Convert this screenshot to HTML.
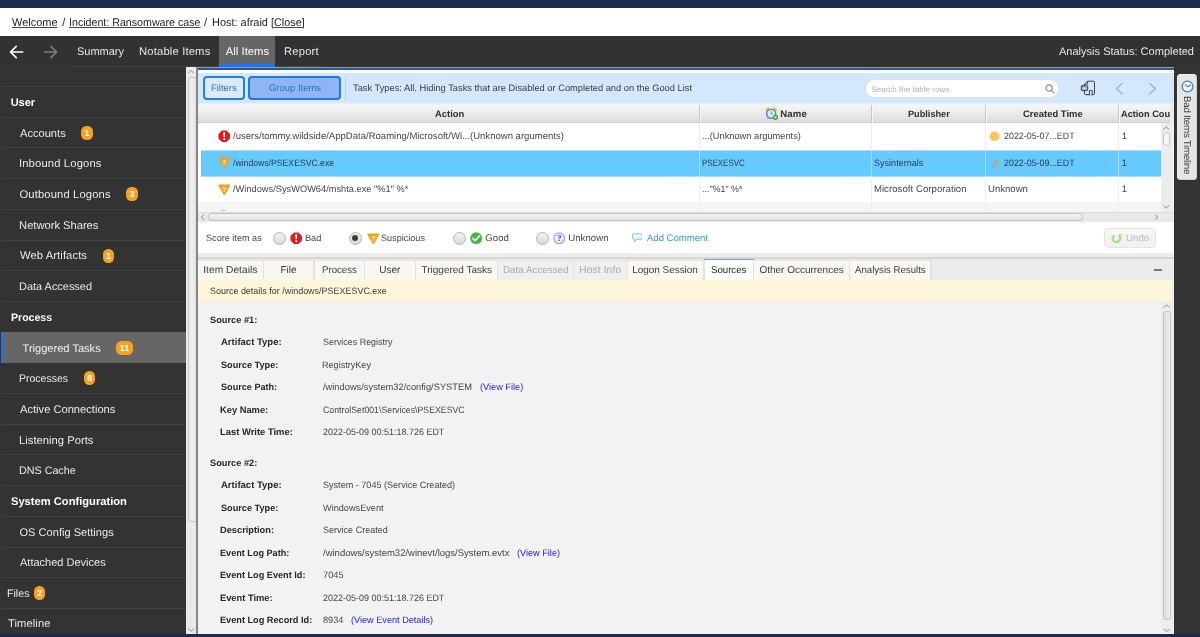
<!DOCTYPE html>
<html lang="en">
<head>
<meta charset="utf-8">
<title>Cyber Triage - Host: afraid</title>
<style>
html,body{margin:0;padding:0;}
body{width:1200px;height:637px;overflow:hidden;background:#333;font-family:"Liberation Sans",sans-serif;}
#root{position:relative;width:1200px;height:637px;overflow:hidden;background:#333;}
#root div,#root svg{position:absolute;box-sizing:border-box;}
#root .tl{left:0;top:0;width:1200px;height:637px;will-change:transform;pointer-events:none;}
.t u{text-decoration-thickness:1px;text-underline-offset:1px;text-decoration-color:#4a4a4a;}
.t{position:absolute;display:block;text-rendering:geometricPrecision;transform-origin:0 50%;height:16px;line-height:16px;white-space:nowrap;font-family:"Liberation Sans",sans-serif;}
.bdg{background:#f7a11d;border-radius:5.2px;color:#fff;font-weight:bold;font-size:9px;line-height:14px;text-align:center;font-family:"Liberation Sans",sans-serif;}
.tab{background:#faf7f4;border-top:1px solid #e3e3e3;}
.tab.dis{background:#efefef;}
.tab.act{background:#fff;border-top:1.6px solid #7a9bd0;}
.radio{border-radius:50%;border:1px solid #b4b4b4;background:linear-gradient(#f2f2f2,#dadada);}
.radio.on:after{content:"";position:absolute;left:2.4px;top:2.4px;width:6.2px;height:6.2px;border-radius:50%;background:#3c3c3c;}
</style>
</head>
<body>
<div id="root">

<header id="titlebar">
<div style="left:0.00px;top:0.00px;width:1200.00px;height:8.00px;background:#1b2a4e;"></div>
<div style="left:0.00px;top:8.00px;width:1200.00px;height:28.00px;background:#fff;"></div>
<div style="left:0.00px;top:36.00px;width:1200.00px;height:31.00px;background:#323232;"></div>
<div class="tl">
<span class="t" id="t0" style="left:12.45px;top:15.02px;font-size:11.13px;color:#222;transform:scaleX(0.9862);"><u>Welcome</u></span>
<span class="t" id="t1" style="left:62.30px;top:15.02px;font-size:11.30px;color:#222;">/</span>
<span class="t" id="t2" style="left:69.02px;top:15.02px;font-size:11.13px;color:#222;transform:scaleX(0.9576);"><u>Incident: Ransomware case</u></span>
<span class="t" id="t3" style="left:204.00px;top:15.02px;font-size:11.30px;color:#222;">/</span>
<span class="t" id="t4" style="left:211.80px;top:15.02px;font-size:11.13px;color:#222;transform:scaleX(0.9826);">Host: afraid</span>
<span class="t" id="t5" style="left:271.03px;top:15.02px;font-size:11.13px;color:#222;transform:scaleX(0.9746);"><u>[Close]</u></span>
</div>
</header>
<nav id="topnav">
<div style="left:70.00px;top:66.20px;width:253.00px;height:0.80px;background:#414141;"></div>
<div style="left:218.50px;top:36.00px;width:56.50px;height:31.00px;background:#666;"></div>
<div style="left:218.50px;top:64.30px;width:56.50px;height:2.70px;background:#1a73ff;"></div>
<svg style="left:8px;top:44px" width="52" height="16" viewBox="8 44 52 16" fill="none" stroke-width="1.7" stroke-linecap="round" stroke-linejoin="round"><path d="M22.6 52H10.6M16.2 46.3L10.6 52l5.6 5.7" stroke="#fff"/><path d="M44.6 52h12M51 46.3l5.6 5.7-5.6 5.7" stroke="#7d7d7d"/></svg>
<div class="tl">
<span class="t" id="t6" style="left:77.00px;top:44.01px;font-size:10.99px;color:#e6e6e6;letter-spacing:0.003px;">Summary</span>
<span class="t" id="t7" style="left:139.08px;top:44.01px;font-size:11.22px;color:#e6e6e6;letter-spacing:0.162px;">Notable Items</span>
<span class="t" id="t8" style="left:225.78px;top:44.01px;font-size:11.22px;color:#fff;letter-spacing:0.035px;">All Items</span>
<span class="t" id="t9" style="left:284.08px;top:44.01px;font-size:11.22px;color:#e6e6e6;letter-spacing:0.169px;">Report</span>
<span class="t" id="t10" style="left:1058.98px;top:44.01px;font-size:11.04px;color:#e6e6e6;letter-spacing:0.005px;">Analysis Status: Completed</span>
</div>
</nav>
<aside id="sidebar">
<div style="left:0.00px;top:67.00px;width:186.30px;height:566.50px;background:#333;"></div>
<div style="left:1.00px;top:85.80px;width:185.00px;height:1.00px;background:#41403b;"></div>
<div style="left:1.00px;top:116.50px;width:185.00px;height:1.00px;background:#41403b;"></div>
<div style="left:1.00px;top:147.30px;width:185.00px;height:1.00px;background:#41403b;"></div>
<div style="left:1.00px;top:178.10px;width:185.00px;height:1.00px;background:#41403b;"></div>
<div style="left:1.00px;top:208.80px;width:185.00px;height:1.00px;background:#41403b;"></div>
<div style="left:1.00px;top:239.50px;width:185.00px;height:1.00px;background:#41403b;"></div>
<div style="left:1.00px;top:270.20px;width:185.00px;height:1.00px;background:#41403b;"></div>
<div style="left:1.00px;top:300.90px;width:185.00px;height:1.00px;background:#41403b;"></div>
<div style="left:1.00px;top:392.90px;width:185.00px;height:1.00px;background:#41403b;"></div>
<div style="left:1.00px;top:423.60px;width:185.00px;height:1.00px;background:#41403b;"></div>
<div style="left:1.00px;top:454.30px;width:185.00px;height:1.00px;background:#41403b;"></div>
<div style="left:1.00px;top:485.10px;width:185.00px;height:1.00px;background:#41403b;"></div>
<div style="left:1.00px;top:515.80px;width:185.00px;height:1.00px;background:#41403b;"></div>
<div style="left:1.00px;top:546.50px;width:185.00px;height:1.00px;background:#41403b;"></div>
<div style="left:1.00px;top:577.20px;width:185.00px;height:1.00px;background:#41403b;"></div>
<div style="left:1.00px;top:607.90px;width:185.00px;height:1.00px;background:#41403b;"></div>
<div style="left:1.00px;top:332.20px;width:185.30px;height:30.60px;background:#666;"></div>
<div style="left:1.00px;top:332.20px;width:2.20px;height:30.60px;background:#1f6fff;"></div>
<div class="bdg" style="left:81.30px;top:125.80px;width:11.50px;height:14.00px;">1</div>
<div class="bdg" style="left:126.20px;top:187.10px;width:11.80px;height:14.00px;">3</div>
<div class="bdg" style="left:102.70px;top:248.50px;width:11.50px;height:14.00px;">1</div>
<div class="bdg" style="left:116.20px;top:340.80px;width:16.60px;height:14.00px;">11</div>
<div class="bdg" style="left:84.20px;top:371.40px;width:11.30px;height:14.00px;">8</div>
<div class="bdg" style="left:34.20px;top:585.90px;width:11.00px;height:14.00px;">2</div>
<div style="left:186.30px;top:67.00px;width:9.90px;height:566.50px;background:#e9e9e9;"></div>
<div style="left:188.00px;top:77.00px;width:8.40px;height:444.70px;background:linear-gradient(90deg,#e6e6e6,#f0f0f0 40%,#e2e2e2);border:1px solid #cbcbcb;border-right:none;border-radius:3.5px 0 0 3.5px;"></div>
<svg style="left:186.3px;top:67px" width="10" height="567" viewBox="0 0 10 567" fill="none" stroke="#8a8a8a" stroke-width="1"><path d="M2.2 6.2L5 3.4l2.8 2.8"/><path d="M2.2 561.5L5 564.3l2.8-2.8"/></svg>
<div style="left:196.20px;top:67.00px;width:1.60px;height:566.50px;background:#858585;"></div>
<div class="tl">
<span class="t" id="t11" style="left:10.64px;top:95.01px;font-size:11.03px;color:#fff;letter-spacing:0.007px;font-weight:bold;">User</span>
<span class="t" id="t12" style="left:19.98px;top:126.00px;font-size:11.12px;color:#e9e9e9;letter-spacing:0.003px;">Accounts</span>
<span class="t" id="t13" style="left:18.96px;top:156.01px;font-size:11.22px;color:#e9e9e9;letter-spacing:0.154px;">Inbound Logons</span>
<span class="t" id="t14" style="left:19.47px;top:187.00px;font-size:11.22px;color:#e9e9e9;letter-spacing:0.136px;">Outbound Logons</span>
<span class="t" id="t15" style="left:19.09px;top:218.00px;font-size:11.15px;color:#e9e9e9;letter-spacing:0.004px;">Network Shares</span>
<span class="t" id="t16" style="left:19.95px;top:248.02px;font-size:11.22px;color:#e9e9e9;letter-spacing:0.097px;">Web Artifacts</span>
<span class="t" id="t17" style="left:19.10px;top:279.01px;font-size:10.93px;color:#e9e9e9;letter-spacing:0.003px;">Data Accessed</span>
<span class="t" id="t18" style="left:10.59px;top:310.00px;font-size:10.83px;color:#fff;transform:scaleX(0.9738);font-weight:bold;">Process</span>
<span class="t" id="t19" style="left:22.55px;top:341.01px;font-size:11.07px;color:#f2f2f2;letter-spacing:0.004px;">Triggered Tasks</span>
<span class="t" id="t20" style="left:19.14px;top:371.01px;font-size:10.83px;color:#e9e9e9;transform:scaleX(0.9699);">Processes</span>
<span class="t" id="t21" style="left:19.98px;top:402.01px;font-size:11.15px;color:#e9e9e9;letter-spacing:0.003px;">Active Connections</span>
<span class="t" id="t22" style="left:19.08px;top:433.01px;font-size:11.22px;color:#e9e9e9;letter-spacing:0.007px;">Listening Ports</span>
<span class="t" id="t23" style="left:19.12px;top:463.01px;font-size:10.83px;color:#e9e9e9;transform:scaleX(0.9910);">DNS Cache</span>
<span class="t" id="t24" style="left:10.98px;top:494.01px;font-size:11.16px;color:#fff;font-weight:bold;">System Configuration</span>
<span class="t" id="t25" style="left:19.48px;top:525.01px;font-size:11.08px;color:#e9e9e9;">OS Config Settings</span>
<span class="t" id="t26" style="left:19.98px;top:555.00px;font-size:11.01px;color:#e9e9e9;letter-spacing:0.007px;">Attached Devices</span>
<span class="t" id="t27" style="left:7.43px;top:586.00px;font-size:10.83px;color:#e9e9e9;transform:scaleX(0.9817);">Files</span>
<span class="t" id="t28" style="left:8.05px;top:616.01px;font-size:11.22px;color:#e9e9e9;letter-spacing:0.058px;">Timeline</span>
</div>
</aside>
<main id="main-panel">
<div style="left:197.80px;top:67.00px;width:975.90px;height:566.50px;background:#f2f2f2;"></div>
<div style="left:197.80px;top:67.00px;width:975.90px;height:1.00px;background:#9a9a9a;"></div>
<div style="left:197.80px;top:67.70px;width:975.90px;height:2.30px;background:#2b579a;"></div>
<div style="left:197.80px;top:70.00px;width:975.90px;height:2.60px;background:#fff;"></div>
<div style="left:197.80px;top:72.60px;width:975.90px;height:30.80px;background:#d3e8fd;"></div>
<div style="left:197.80px;top:103.40px;width:975.90px;height:1.10px;background:#e4f0fb;"></div>
<section id="toolbar">
<div style="left:203.30px;top:76.20px;width:41.50px;height:23.60px;background:#d9eafc;border:2px solid #2480d6;border-radius:4px;"></div>
<div style="left:248.00px;top:76.20px;width:93.20px;height:23.60px;background:#8fb5f6;border:2px solid #2478d8;border-radius:4px;"></div>
<div style="left:345.00px;top:77.00px;width:1.00px;height:22.50px;background:#c3cfdc;"></div>
<div style="left:864.80px;top:79.30px;width:194.60px;height:18.50px;background:#fff;border:1px solid #dcdfe4;border-radius:9.25px;"></div>
<svg style="left:1044px;top:83px" width="12" height="12" viewBox="0 0 12 12" fill="none" stroke="#8a8a8a" stroke-width="1.2" stroke-linecap="round"><circle cx="5" cy="5" r="3.1"/><path d="M7.4 7.4l2.7 2.7"/></svg>
<svg style="left:1080px;top:80px" width="17" height="17" viewBox="0 0 17 17" fill="none" stroke="#36404e" stroke-width="1" stroke-linejoin="round" stroke-linecap="round"><path d="M4.400 5.600V4.300L7.500 1.200H13a1.500 1.500 0 0 1 1.500 1.500v10.500a1.500 1.500 0 0 1-1.500 1.500H5.900a1.500 1.500 0 0 1-1.500-1.500v-2.400"/><path d="M4.700 4.400h2.800V1.600" stroke-width=".8"/><rect x="1.300" y="5.800" width="6.400" height="4.800" rx=".8" fill="#a9b3bf"/><path d="M3.200 8.200h2.600" stroke="#eef2f6" stroke-width=".9"/><path d="M9.400 14.700v-4.100h2.800v4.100" fill="#e6eef7"/></svg>
<svg style="left:1114px;top:82px" width="46" height="14" viewBox="0 0 46 14" fill="none" stroke="#97a1ad" stroke-width="1.100" stroke-linecap="round" stroke-linejoin="round"><path d="M8.200 1.300L2.400 6.600l5.800 5.300"/><path d="M35.600 1.300l5.800 5.300-5.800 5.300"/></svg>
<div class="tl">
<span class="t" id="t29" style="left:210.93px;top:80.02px;font-size:9.43px;color:#2a78d2;transform:scaleX(0.9983);">Filters</span>
<span class="t" id="t30" style="left:268.72px;top:81.01px;font-size:9.50px;color:#2a70cc;transform:scaleX(0.9969);">Group Items</span>
<span class="t" id="t31" style="left:352.79px;top:80.01px;font-size:9.32px;color:#3a3a3a;transform:scaleX(0.9977);">Task Types: All. Hiding Tasks that are Disabled or Completed and on the Good List</span>
<span class="t" id="t32" style="left:871.33px;top:82.01px;font-size:8.06px;color:#b0b0b0;letter-spacing:0.005px;">Search the table rows</span>
</div>
</section>
<section id="items-table">
<div style="left:198.30px;top:104.50px;width:971.90px;height:18.30px;background:linear-gradient(#f6f6f6,#ececec 45%,#dcdcdc);border-bottom:1px solid #cfcfcf;"></div>
<div style="left:1170.20px;top:104.50px;width:3.50px;height:18.30px;background:#ececec;"></div>
<div style="left:698.70px;top:105.00px;width:1.20px;height:17.50px;background:#c6c6c6;"></div>
<div style="left:699.90px;top:105.00px;width:0.90px;height:17.50px;background:#f7f7f7;"></div>
<div style="left:870.80px;top:105.00px;width:1.20px;height:17.50px;background:#c6c6c6;"></div>
<div style="left:872.00px;top:105.00px;width:0.90px;height:17.50px;background:#f7f7f7;"></div>
<div style="left:984.80px;top:105.00px;width:1.20px;height:17.50px;background:#c6c6c6;"></div>
<div style="left:986.00px;top:105.00px;width:0.90px;height:17.50px;background:#f7f7f7;"></div>
<div style="left:1118.10px;top:105.00px;width:1.20px;height:17.50px;background:#c6c6c6;"></div>
<div style="left:1119.30px;top:105.00px;width:0.90px;height:17.50px;background:#f7f7f7;"></div>
<div style="left:198.30px;top:122.80px;width:963.00px;height:79.20px;background:#fff;"></div>
<div style="left:198.30px;top:202.00px;width:963.00px;height:9.60px;background:#f5f5f5;"></div>
<div style="left:200.60px;top:149.60px;width:960.70px;height:27.20px;background:#66caff;border-top:1.7px solid #abdefc;border-bottom:1.3px solid #abdefc;"></div>
<div style="left:698.80px;top:125.00px;width:1.00px;height:86.60px;background:#ededed;"></div>
<div style="left:698.80px;top:151.00px;width:1.20px;height:24.60px;background:#a6dcfb;"></div>
<div style="left:870.90px;top:125.00px;width:1.00px;height:86.60px;background:#ededed;"></div>
<div style="left:870.90px;top:151.00px;width:1.20px;height:24.60px;background:#a6dcfb;"></div>
<div style="left:984.90px;top:125.00px;width:1.00px;height:86.60px;background:#ededed;"></div>
<div style="left:984.90px;top:151.00px;width:1.20px;height:24.60px;background:#a6dcfb;"></div>
<div style="left:1118.20px;top:125.00px;width:1.00px;height:86.60px;background:#ededed;"></div>
<div style="left:1118.20px;top:151.00px;width:1.20px;height:24.60px;background:#a6dcfb;"></div>
<div style="left:221.00px;top:210.40px;width:5.00px;height:1.00px;background:#a4e08c;border-radius:2px 2px 0 0;"></div>
<svg style="left:217.70px;top:130.00px" width="12.4" height="12.4" viewBox="0 0 24 24"><path d="M7.6 .8h8.8l6.8 6.8v8.8l-6.8 6.8H7.6L.8 16.4V7.6z" fill="#e01b24"/><path d="M10.2 4.2h3.6l-.6 10h-2.4z" fill="#fff"/><circle cx="12" cy="18" r="2" fill="#fff"/></svg>
<svg style="left:217.60px;top:157.40px" width="12.6" height="11.6" viewBox="0 0 25 23"><path d="M2.2 1h20.6c1.3 0 1.9 1.2 1.3 2.3L14 21.4c-.7 1.2-2.3 1.2-3 0L.9 3.3C.3 2.200 .9 1 2.200 1z" fill="#f7a11a"/><text x="12.5" y="15.6" font-family="Liberation Sans, sans-serif" font-weight="bold" font-size="15.5" fill="#fffaf0" text-anchor="middle">?</text></svg>
<svg style="left:217.60px;top:183.90px" width="12.6" height="11.6" viewBox="0 0 25 23"><path d="M2.2 1h20.6c1.3 0 1.9 1.2 1.3 2.3L14 21.4c-.7 1.2-2.3 1.2-3 0L.9 3.3C.3 2.200 .9 1 2.200 1z" fill="#f7a11a"/><text x="12.5" y="15.6" font-family="Liberation Sans, sans-serif" font-weight="bold" font-size="15.5" fill="#fffaf0" text-anchor="middle">?</text></svg>
<svg style="left:989.400px;top:130.500px" width="10.8" height="10.8" viewBox="0 0 20 20"><circle cx="10" cy="10" r="8.200" fill="#f8c54f"/><circle cx="10" cy="10" r="9.300" fill="none" stroke="#f8c54f" stroke-width="1.800" stroke-dasharray="2.200 1.700"/></svg>
<svg style="left:991.200px;top:158.800px" width="9" height="9" viewBox="0 0 18 18"><path d="M7.600 1.200c4.800.8 7.600 4.800 6.600 9.200-.8 3.600-4.400 6-8.600 5.400-1.400-.2-2.600-.8-3.400-1.600 3.200-.2 5.800-2.400 6.400-5.600.4-2.800-.4-5.400-1-7.400z" fill="#c9b48c" stroke="#8f8466" stroke-width="1"/></svg>
<svg style="left:764.8px;top:107px" width="13.2" height="13.2" viewBox="0 0 26 26"><ellipse cx="4.800" cy="4.400" rx="4.600" ry="3" transform="rotate(-40 4.800 4.400)" fill="#f5c04a"/><ellipse cx="19.600" cy="4.400" rx="4.600" ry="3" transform="rotate(40 19.600 4.400)" fill="#f5c04a"/><path d="M4.500 24.500l2.500-3M19.900 24.500l-2.500-3" stroke="#8a97ad" stroke-width="1.600"/><circle cx="12.200" cy="13.300" r="10.400" fill="#4a8ede"/><circle cx="12.200" cy="13.300" r="7.300" fill="#e1edfc"/><path d="M12.200 8.600v5h3.400" fill="none" stroke="#6b7c99" stroke-width="1.700"/><circle cx="20.600" cy="20.300" r="5.300" fill="#3fae3a"/><path d="M18.700 17.300l5.200 3-5.200 3z" fill="#c6efb4"/></svg>
<div style="left:1161.30px;top:122.80px;width:10.30px;height:88.80px;background:#ececec;"></div>
<div style="left:1163.00px;top:132.00px;width:7.20px;height:13.60px;background:#f6f6f6;border:1px solid #c6c6c6;border-radius:3.5px;"></div>
<svg style="left:1161.3px;top:122.8px" width="10.3" height="89" viewBox="0 0 10.3 89" fill="none" stroke="#8a8a8a" stroke-width="1"><path d="M2.3 6.6l2.9-2.8 2.9 2.8"/><path d="M2.3 82.4l2.9 2.8 2.9-2.8"/></svg>
<div style="left:198.30px;top:211.60px;width:975.40px;height:10.20px;background:#e9e9e9;border-top:1px solid #dcdcdc;"></div>
<div style="left:208.40px;top:212.80px;width:874.60px;height:8.00px;background:linear-gradient(#f4f4f4,#e2e2e2);border:1px solid #c2c2c2;border-radius:3.5px;"></div>
<svg style="left:198.3px;top:211.6px" width="975" height="10.2" viewBox="0 0 975 10.2" fill="none" stroke="#8a8a8a" stroke-width="1"><path d="M5.6 2.4L2.8 5.2l2.8 2.8"/><path d="M957.4 2.4l2.8 2.8-2.8 2.8"/></svg>
<div class="tl">
<span class="t" id="t33" style="left:435.07px;top:106.01px;font-size:9.41px;color:#2e2e2e;transform:scaleX(0.9983);font-weight:bold;">Action</span>
<span class="t" id="t34" style="left:780.16px;top:107.01px;font-size:9.59px;color:#2e2e2e;letter-spacing:0.194px;font-weight:bold;">Name</span>
<span class="t" id="t35" style="left:908.09px;top:106.01px;font-size:9.26px;color:#2e2e2e;transform:scaleX(0.9904);font-weight:bold;">Publisher</span>
<span class="t" id="t36" style="left:1022.61px;top:107.00px;font-size:9.48px;color:#2e2e2e;transform:scaleX(0.9981);font-weight:bold;">Created Time</span>
<span class="t" id="t37" style="left:1121.27px;top:106.01px;font-size:9.26px;color:#2e2e2e;transform:scaleX(0.9941);font-weight:bold;">Action Cou</span>
<span class="t" id="t38" style="left:233.00px;top:129.01px;font-size:9.57px;color:#454545;transform:scaleX(0.9984);">/users/tommy.wildside/AppData/Roaming/Microsoft/Wi...(Unknown arguments)</span>
<span class="t" id="t39" style="left:701.65px;top:128.01px;font-size:9.29px;color:#454545;transform:scaleX(0.9987);">...(Unknown arguments)</span>
<span class="t" id="t40" style="left:1003.75px;top:128.01px;font-size:9.26px;color:#454545;transform:scaleX(0.9608);">2022-05-07...EDT</span>
<span class="t" id="t41" style="left:1121.78px;top:128.00px;font-size:9.40px;color:#454545;">1</span>
<span class="t" id="t42" style="left:233.00px;top:155.01px;font-size:9.26px;color:#2b3d4a;transform:scaleX(0.9362);">/windows/PSEXESVC.exe</span>
<span class="t" id="t43" style="left:701.85px;top:155.01px;font-size:9.26px;color:#2b3d4a;transform:scaleX(0.8552);">PSEXESVC</span>
<span class="t" id="t44" style="left:874.29px;top:155.01px;font-size:9.26px;color:#2b3d4a;transform:scaleX(0.9791);">Sysinternals</span>
<span class="t" id="t45" style="left:1003.75px;top:155.01px;font-size:9.26px;color:#2b3d4a;transform:scaleX(0.9608);">2022-05-09...EDT</span>
<span class="t" id="t46" style="left:1121.78px;top:155.01px;font-size:9.40px;color:#2b3d4a;">1</span>
<span class="t" id="t47" style="left:233.00px;top:181.00px;font-size:9.29px;color:#454545;transform:scaleX(0.9982);">/Windows/SysWOW64/mshta.exe &quot;%1&quot; %*</span>
<span class="t" id="t48" style="left:701.69px;top:181.01px;font-size:9.26px;color:#454545;transform:scaleX(0.9621);">...&quot;%1&quot; %*</span>
<span class="t" id="t49" style="left:873.91px;top:182.01px;font-size:9.59px;color:#454545;letter-spacing:0.055px;">Microsoft Corporation</span>
<span class="t" id="t50" style="left:987.96px;top:182.01px;font-size:9.58px;color:#454545;transform:scaleX(0.9980);">Unknown</span>
<span class="t" id="t51" style="left:1121.78px;top:181.01px;font-size:9.40px;color:#454545;">1</span>
</div>
</section>
<section id="scorebar">
<div style="left:197.80px;top:221.80px;width:975.90px;height:30.90px;background:#fff;"></div>
<div style="left:197.80px;top:252.70px;width:975.90px;height:3.90px;background:#ededed;"></div>
<div style="left:197.80px;top:256.70px;width:975.90px;height:2.00px;background:#d5d5d5;"></div>
<div class="radio" style="left:272.80px;top:231.70px;width:13.00px;height:13.00px;"></div>
<div class="radio on" style="left:348.90px;top:231.70px;width:13.00px;height:13.00px;"></div>
<div class="radio" style="left:453.10px;top:231.70px;width:13.00px;height:13.00px;"></div>
<div class="radio" style="left:536.00px;top:231.70px;width:13.00px;height:13.00px;"></div>
<svg style="left:290.00px;top:232.10px" width="12.4" height="12.4" viewBox="0 0 24 24"><path d="M7.6 .8h8.8l6.8 6.8v8.8l-6.8 6.8H7.6L.8 16.4V7.6z" fill="#e01b24"/><path d="M10.2 4.2h3.6l-.6 10h-2.4z" fill="#fff"/><circle cx="12" cy="18" r="2" fill="#fff"/></svg>
<svg style="left:366.50px;top:232.80px" width="12.6" height="11.6" viewBox="0 0 25 23"><path d="M2.2 1h20.6c1.3 0 1.9 1.2 1.3 2.3L14 21.4c-.7 1.2-2.3 1.2-3 0L.9 3.3C.3 2.200 .9 1 2.200 1z" fill="#f7a11a"/><text x="12.5" y="15.6" font-family="Liberation Sans, sans-serif" font-weight="bold" font-size="15.5" fill="#fffaf0" text-anchor="middle">?</text></svg>
<svg style="left:470.30px;top:232.00px" width="12.4" height="12.4" viewBox="0 0 24 24"><circle cx="12" cy="12" r="11.6" fill="#4cb648"/><path d="M5.600 12.400l4.400 4.600 8.600-9.600" fill="none" stroke="#fff" stroke-width="3.2" stroke-linecap="round" stroke-linejoin="round"/></svg>
<svg style="left:553.40px;top:232.00px" width="12.4" height="12.4" viewBox="0 0 24 24"><circle cx="12" cy="12" r="10.4" fill="#e9edff" stroke="#9aa6f4" stroke-width="2.4"/><text x="12" y="18" font-family="Liberation Serif, serif" font-weight="bold" font-size="17" fill="#2f49c8" text-anchor="middle">?</text></svg>
<svg style="left:631.6px;top:233px" width="10.8" height="9.9" viewBox="0 0 12 11" fill="#f2f8fd" stroke="#78b4de" stroke-width="1" stroke-linejoin="round"><path d="M1.6.9h8.600c.6 0 1 .4 1 1v4c0 .6-.4 1-1 1H5.400L3 9.400V6.900H1.600c-.6 0-1-.4-1-1v-4c0-.6.4-1 1-1z"/></svg>
<div style="left:1104.30px;top:228.00px;width:51.30px;height:19.80px;background:linear-gradient(#fbf7f5 0,#fbf7f5 27%,#f2f2f2 27%);border:1px solid #e4e4e4;border-radius:3.5px;"></div>
<svg style="left:1111.400px;top:232.600px" width="11" height="11" viewBox="0 0 11 11" fill="none"><path d="M2.600 3.200A3.600 3.600 0 1 0 8.300 3.100" stroke="#a6df8a" stroke-width="2.300" stroke-linecap="round"/><path d="M7.200 .4h3.400v3.200z" fill="#b4e59c"/></svg>
<div class="tl">
<span class="t" id="t52" style="left:206.29px;top:230.01px;font-size:9.26px;color:#444;transform:scaleX(0.9855);">Score item as</span>
<span class="t" id="t53" style="left:305.05px;top:230.01px;font-size:9.26px;color:#444;transform:scaleX(0.9926);">Bad</span>
<span class="t" id="t54" style="left:381.39px;top:230.01px;font-size:9.26px;color:#444;transform:scaleX(0.9823);">Suspicious</span>
<span class="t" id="t55" style="left:485.32px;top:231.01px;font-size:9.59px;color:#444;letter-spacing:0.041px;">Good</span>
<span class="t" id="t56" style="left:568.26px;top:231.01px;font-size:9.59px;color:#444;letter-spacing:0.061px;">Unknown</span>
<span class="t" id="t57" style="left:646.68px;top:231.01px;font-size:9.55px;color:#2a9fd8;transform:scaleX(0.9977);">Add Comment</span>
<span class="t" id="t58" style="left:1126.06px;top:231.01px;font-size:9.59px;color:#bcbcbc;letter-spacing:0.059px;">Undo</span>
</div>
</section>
<section id="detail-tabs">
<div style="left:197.80px;top:258.70px;width:975.90px;height:20.90px;background:#ebebeb;"></div>
<div class="tab" style="left:197.80px;top:259.60px;width:65.40px;height:20.00px;"></div>
<div class="tab" style="left:263.20px;top:259.60px;width:50.80px;height:20.00px;"></div>
<div class="tab" style="left:314.00px;top:259.60px;width:50.60px;height:20.00px;"></div>
<div class="tab" style="left:364.60px;top:259.60px;width:51.00px;height:20.00px;"></div>
<div class="tab" style="left:415.60px;top:259.60px;width:81.60px;height:20.00px;"></div>
<div class="tab dis" style="left:497.20px;top:259.60px;width:76.40px;height:20.00px;"></div>
<div class="tab dis" style="left:573.60px;top:259.60px;width:54.00px;height:20.00px;"></div>
<div class="tab" style="left:627.60px;top:259.60px;width:76.40px;height:20.00px;"></div>
<div class="tab act" style="left:704.00px;top:258.60px;width:49.80px;height:21.00px;"></div>
<div class="tab" style="left:753.80px;top:259.60px;width:95.60px;height:20.00px;"></div>
<div class="tab" style="left:849.40px;top:259.60px;width:81.60px;height:20.00px;"></div>
<div style="left:262.60px;top:259.60px;width:1.20px;height:20.00px;background:#e0e2e7;"></div>
<div style="left:313.40px;top:259.60px;width:1.20px;height:20.00px;background:#e0e2e7;"></div>
<div style="left:364.00px;top:259.60px;width:1.20px;height:20.00px;background:#e0e2e7;"></div>
<div style="left:415.00px;top:259.60px;width:1.20px;height:20.00px;background:#e0e2e7;"></div>
<div style="left:496.60px;top:259.60px;width:1.20px;height:20.00px;background:#e0e2e7;"></div>
<div style="left:573.00px;top:259.60px;width:1.20px;height:20.00px;background:#e0e2e7;"></div>
<div style="left:627.00px;top:259.60px;width:1.20px;height:20.00px;background:#e0e2e7;"></div>
<div style="left:703.40px;top:259.60px;width:1.20px;height:20.00px;background:#e0e2e7;"></div>
<div style="left:753.20px;top:259.60px;width:1.20px;height:20.00px;background:#e0e2e7;"></div>
<div style="left:848.80px;top:259.60px;width:1.20px;height:20.00px;background:#e0e2e7;"></div>
<div style="left:930.40px;top:259.60px;width:1.20px;height:20.00px;background:#e0e2e7;"></div>
<div style="left:1154.20px;top:269.20px;width:8.20px;height:2.00px;background:#777;"></div>
<div class="tl">
<span class="t" id="t59" style="left:203.26px;top:263.00px;font-size:10.20px;color:#3c3c3c;letter-spacing:0.026px;">Item Details</span>
<span class="t" id="t60" style="left:280.48px;top:263.01px;font-size:10.03px;color:#3c3c3c;letter-spacing:0.007px;">File</span>
<span class="t" id="t61" style="left:321.71px;top:263.01px;font-size:9.85px;color:#3c3c3c;transform:scaleX(0.9797);">Process</span>
<span class="t" id="t62" style="left:379.22px;top:263.01px;font-size:10.06px;color:#3c3c3c;letter-spacing:0.006px;">User</span>
<span class="t" id="t63" style="left:421.47px;top:263.00px;font-size:10.00px;color:#3c3c3c;">Triggered Tasks</span>
<span class="t" id="t64" style="left:502.89px;top:263.01px;font-size:9.85px;color:#a9a9a9;transform:scaleX(0.9980);">Data Accessed</span>
<span class="t" id="t65" style="left:579.16px;top:263.00px;font-size:10.20px;color:#a9a9a9;letter-spacing:0.143px;">Host Info</span>
<span class="t" id="t66" style="left:632.19px;top:263.02px;font-size:9.92px;color:#3c3c3c;letter-spacing:0.009px;">Logon Session</span>
<span class="t" id="t67" style="left:711.26px;top:263.01px;font-size:9.85px;color:#222;transform:scaleX(0.9796);">Sources</span>
<span class="t" id="t68" style="left:759.53px;top:263.00px;font-size:9.96px;color:#3c3c3c;letter-spacing:0.003px;">Other Occurrences</span>
<span class="t" id="t69" style="left:854.98px;top:263.01px;font-size:9.85px;color:#3c3c3c;transform:scaleX(0.9785);">Analysis Results</span>
</div>
</section>
<section id="source-details">
<div style="left:197.80px;top:279.60px;width:974.60px;height:21.60px;background:#fff5d8;"></div>
<div style="left:1172.40px;top:258.70px;width:1.30px;height:374.80px;background:#ededed;"></div>
<div style="left:197.80px;top:301.20px;width:975.90px;height:332.30px;background:#f2f2f2;"></div>
<div style="left:1161.40px;top:301.60px;width:12.30px;height:331.90px;background:#ececec;"></div>
<div style="left:1163.40px;top:311.20px;width:7.50px;height:309.20px;background:linear-gradient(90deg,#dedede,#ececec);border:1px solid #c2c5c9;border-radius:2.5px;"></div>
<svg style="left:1162.4px;top:301.6px" width="9.2" height="332" viewBox="0 0 9.2 332" fill="none" stroke="#8a8a8a" stroke-width="1"><path d="M1.800 5.400L4.600 2.600l2.800 2.800"/><path d="M1.800 327.100l2.800 2.800 2.800-2.800"/></svg>
<div class="tl">
<span class="t" id="t70" style="left:209.89px;top:283.02px;font-size:9.26px;color:#3a3a3a;transform:scaleX(0.9686);">Source details for /windows/PSEXESVC.exe</span>
<span class="t" id="t71" style="left:210.43px;top:312.00px;font-size:9.27px;color:#262626;transform:scaleX(0.9971);font-weight:bold;">Source #1:</span>
<span class="t" id="t72" style="left:220.76px;top:335.01px;font-size:9.55px;color:#262626;transform:scaleX(0.9971);font-weight:bold;">Artifact Type:</span>
<span class="t" id="t73" style="left:220.74px;top:357.02px;font-size:9.26px;color:#262626;transform:scaleX(0.9901);font-weight:bold;">Source Type:</span>
<span class="t" id="t74" style="left:220.74px;top:379.02px;font-size:9.26px;color:#262626;transform:scaleX(0.9838);font-weight:bold;">Source Path:</span>
<span class="t" id="t75" style="left:220.38px;top:402.00px;font-size:9.35px;color:#262626;transform:scaleX(0.9981);font-weight:bold;">Key Name:</span>
<span class="t" id="t76" style="left:220.37px;top:424.00px;font-size:9.43px;color:#262626;transform:scaleX(0.9984);font-weight:bold;">Last Write Time:</span>
<span class="t" id="t77" style="left:322.59px;top:334.02px;font-size:9.26px;color:#444;transform:scaleX(0.9646);">Services Registry</span>
<span class="t" id="t78" style="left:322.25px;top:357.02px;font-size:9.26px;color:#444;transform:scaleX(0.9817);">RegistryKey</span>
<span class="t" id="t79" style="left:323.00px;top:379.01px;font-size:9.33px;color:#444;transform:scaleX(0.9977);">/windows/system32/config/SYSTEM</span>
<span class="t" id="t80" style="left:479.63px;top:379.02px;font-size:9.26px;color:#2424e8;transform:scaleX(0.9933);">(View File)</span>
<span class="t" id="t81" style="left:322.56px;top:402.02px;font-size:9.26px;color:#444;transform:scaleX(0.9469);">ControlSet001\Services\PSEXESVC</span>
<span class="t" id="t82" style="left:322.55px;top:424.02px;font-size:9.26px;color:#444;transform:scaleX(0.9711);">2022-05-09 00:51:18.726 EDT</span>
<span class="t" id="t83" style="left:210.43px;top:455.01px;font-size:9.27px;color:#262626;transform:scaleX(0.9971);font-weight:bold;">Source #2:</span>
<span class="t" id="t84" style="left:220.76px;top:478.01px;font-size:9.55px;color:#262626;transform:scaleX(0.9971);font-weight:bold;">Artifact Type:</span>
<span class="t" id="t85" style="left:220.74px;top:500.01px;font-size:9.26px;color:#262626;transform:scaleX(0.9901);font-weight:bold;">Source Type:</span>
<span class="t" id="t86" style="left:220.38px;top:522.01px;font-size:9.28px;color:#262626;transform:scaleX(0.9991);font-weight:bold;">Description:</span>
<span class="t" id="t87" style="left:220.39px;top:545.01px;font-size:9.26px;color:#262626;transform:scaleX(0.9841);font-weight:bold;">Event Log Path:</span>
<span class="t" id="t88" style="left:220.39px;top:567.01px;font-size:9.26px;color:#262626;transform:scaleX(0.9902);font-weight:bold;">Event Log Event Id:</span>
<span class="t" id="t89" style="left:220.38px;top:590.01px;font-size:9.32px;color:#262626;transform:scaleX(0.9979);font-weight:bold;">Event Time:</span>
<span class="t" id="t90" style="left:220.39px;top:612.01px;font-size:9.26px;color:#262626;transform:scaleX(0.9910);font-weight:bold;">Event Log Record Id:</span>
<span class="t" id="t91" style="left:322.59px;top:477.01px;font-size:9.26px;color:#444;transform:scaleX(0.9805);">System - 7045 (Service Created)</span>
<span class="t" id="t92" style="left:322.96px;top:500.01px;font-size:9.26px;color:#444;transform:scaleX(0.9905);">WindowsEvent</span>
<span class="t" id="t93" style="left:322.59px;top:522.01px;font-size:9.26px;color:#444;transform:scaleX(0.9769);">Service Created</span>
<span class="t" id="t94" style="left:323.00px;top:546.00px;font-size:9.53px;color:#444;transform:scaleX(0.9990);">/windows/system32/winevt/logs/System.evtx</span>
<span class="t" id="t95" style="left:517.23px;top:545.01px;font-size:9.26px;color:#2424e8;transform:scaleX(0.9886);">(View File)</span>
<span class="t" id="t96" style="left:322.53px;top:567.01px;font-size:9.27px;color:#444;transform:scaleX(0.9969);">7045</span>
<span class="t" id="t97" style="left:322.55px;top:590.01px;font-size:9.26px;color:#444;transform:scaleX(0.9711);">2022-05-09 00:51:18.726 EDT</span>
<span class="t" id="t98" style="left:322.60px;top:612.01px;font-size:9.26px;color:#444;transform:scaleX(0.9897);">8934</span>
<span class="t" id="t99" style="left:351.33px;top:612.01px;font-size:9.26px;color:#2424e8;transform:scaleX(0.9881);">(View Event Details)</span>
</div>
</section>
</main>
<aside id="timeline-tab">
<div style="left:1173.70px;top:67.00px;width:26.30px;height:566.50px;background:#333;"></div>
<div style="left:1177.30px;top:74.30px;width:19.90px;height:106.20px;background:#e6e6e6;border:1px solid #d0d0d0;border-left-color:#f3f3f3;border-top-color:#f3f3f3;border-radius:3.5px;"></div>
<svg style="left:1181px;top:80px" width="13" height="13" viewBox="0 0 13 13" fill="#eef5fd" stroke="#3b7fd0" stroke-width="1.250" stroke-linecap="round" stroke-linejoin="round"><circle cx="6.500" cy="6.500" r="5.400"/><path d="M4.300 4.700l2.300 2 2.900-1.500" fill="none" stroke="#35516f" stroke-width="1"/></svg>
<span class="t" id="vt" style="will-change:transform;left:1178.4px;top:96.3px;width:16px;height:80px;line-height:16px;writing-mode:vertical-rl;font-size:9.8px;letter-spacing:-0.29px;color:#3a3a3a;">Bad Items Timeline</span>
</aside>
<footer id="statusbar">
<div style="left:0.00px;top:633.50px;width:1200.00px;height:3.50px;background:#1b2a4e;"></div>
</footer>
</div>
</body>
</html>
